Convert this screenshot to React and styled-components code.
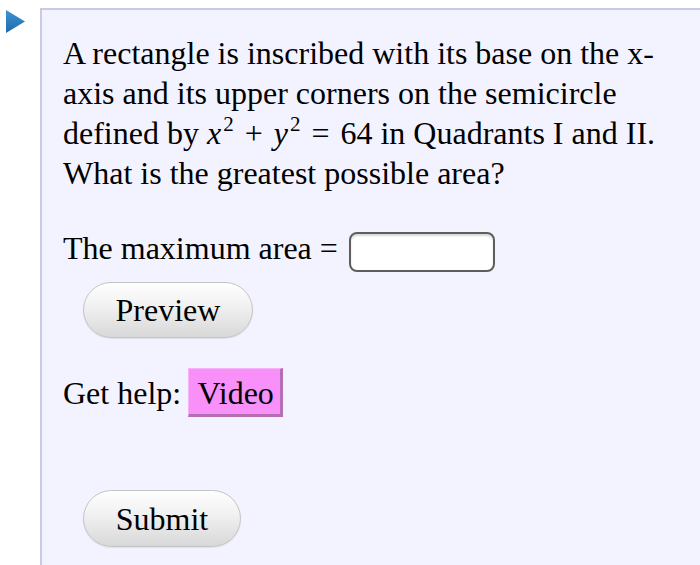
import styled, { createGlobalStyle } from "styled-components"

const Global = createGlobalStyle`
    html, body {
        margin: 0;
        padding: 0;
        background: #ffffff;
    }
    body {
        font-family: "Liberation Serif", "Times New Roman", serif;
        color: #000;
    }
`

const Page = styled.div`
    display: flex;
    min-height: 565px;
    box-sizing: border-box;
`

const Marker = styled.div`
    width: 40px;
    flex-shrink: 0;
    padding-top: 10px;
    padding-left: 6px;
    box-sizing: border-box;
`

const Panel = styled.div`
    flex: 1;
    margin-top: 8px;
    background: #f3f3ff;
    border-left: 2px solid #c9cbe6;
    border-top: 2px solid #c9cbe6;
    padding: 23px 0 0 21px;
    box-sizing: border-box;
    font-size: 32px;
    line-height: 40px;
`

const Question = styled.div`
    width: 628px;
`

const MathVar = styled.i`
    font-family: "Liberation Serif", serif;
    font-style: italic;
`

const Sup = styled.span`
    display: inline-block;
    font-size: 21px;
    line-height: 21px;
    vertical-align: 13px;
    margin-left: 2px;
`

const Op = styled.span`
    margin: 0 11px;
`

const AnswerRow = styled.div`
    display: flex;
    align-items: flex-start;
    margin-top: 35px;
`

const Label = styled.span`
    white-space: nowrap;
`

const AnswerInput = styled.input`
    width: 146px;
    height: 40px;
    margin: 4px 0 0 11px;
    box-sizing: border-box;
    border: 2px solid #5e5e5e;
    border-radius: 8px;
    background: #fff;
    box-shadow: inset 0 2px 2px rgba(0, 0, 0, 0.15);
    outline: none;
`

const PillButton = styled.button`
    display: block;
    width: ${p => p.$w}px;
    height: ${p => p.$h}px;
    margin-left: 20px;
    margin-top: ${p => p.$top}px;
    border: 1px solid #c4c4c4;
    border-radius: 30px;
    background: linear-gradient(#fefefe, #f2f2f2 40%, #d8d8d8);
    box-shadow: 0 1px 1px rgba(0, 0, 0, 0.08);
    font-family: "Liberation Serif", serif;
    font-size: 32px;
    line-height: 40px;
    color: #000;
    padding: 0;
    cursor: pointer;
`

const HelpRow = styled.div`
    display: flex;
    align-items: center;
    margin-top: 30px;
`

const VideoButton = styled.button`
    width: 95px;
    height: 49px;
    margin-left: 7px;
    box-sizing: border-box;
    background: #f98ff9;
    border: 1px solid #f7b3f7;
    border-right: 3px solid #b56db5;
    border-bottom: 3px solid #b56db5;
    font-family: "Liberation Serif", serif;
    font-size: 32px;
    line-height: 40px;
    color: #000;
    padding: 3px 0 0 2px;
    cursor: pointer;
`

const Arrow = () => (
    <svg width="20" height="23" viewBox="0 0 20 23">
        <defs>
            <linearGradient id="arrowFill" x1="0" y1="0" x2="0" y2="1">
                <stop offset="0" stopColor="#3d93d4" />
                <stop offset="1" stopColor="#1f6aa9" />
            </linearGradient>
        </defs>
        <polygon points="0,0 19,11.5 0,23" fill="url(#arrowFill)" />
    </svg>
)

export default function App() {
    return (
        <Page>
            <Global />
            <Marker>
                <Arrow />
            </Marker>
            <Panel>
                <Question>
                    A rectangle is inscribed with its base on the x-axis and its upper corners on the semicircle
                    defined by <MathVar>x</MathVar><Sup>2</Sup><Op>+</Op><MathVar>y</MathVar><Sup>2</Sup><Op>=</Op>64 in Quadrants I and II.
                    What is the greatest possible area?
                </Question>
                <AnswerRow>
                    <Label>The maximum area =</Label>
                    <AnswerInput type="text" />
                </AnswerRow>
                <PillButton $w={170} $h={56} $top={10}>Preview</PillButton>
                <HelpRow>
                    <Label>Get help:</Label>
                    <VideoButton>Video</VideoButton>
                </HelpRow>
                <PillButton $w={158} $h={57} $top={73}>Submit</PillButton>
            </Panel>
        </Page>
    )
}
